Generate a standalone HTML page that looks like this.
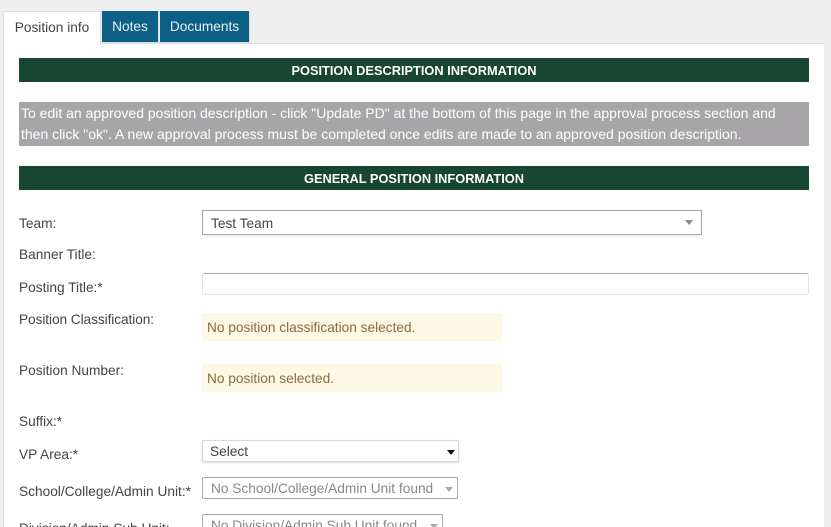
<!DOCTYPE html>
<html>
<head>
<meta charset="utf-8">
<style>
html,body{margin:0;padding:0;width:831px;height:527px;overflow:hidden;background:#eee}
body{position:relative;font-family:"Liberation Sans",sans-serif;font-size:13.7px;color:#444}
div{position:absolute;box-sizing:border-box;white-space:nowrap}
.panel{left:3px;top:43px;width:821px;height:484px;background:#fff;border-left:1px solid #ddd;border-top:1px solid #ddd}
.tab{top:11px;height:32px;background:#0c5f86;color:#e8eef2;line-height:32px;text-align:center;border-bottom:1px solid #ddd;border-right:1px solid #ddd}
.bar{left:19px;width:790px;height:24px;background:#184632;color:#fff;font-weight:bold;font-size:12.8px;line-height:25px;text-align:center}
.lbl{left:19px;line-height:18px;color:#444}
.warn{left:202px;width:300px;height:28px;background:#fdf7e6;color:#8a6d3b;line-height:29px;padding-left:5px}
.sel{background:#fff;border:1px solid #aaa;border-radius:2px}
.arr{width:0;height:0;border-left:4px solid transparent;border-right:4px solid transparent;border-top:5px solid #888}
</style>
</head>
<body>
<div class="panel"></div>
<div style="left:3px;top:11px;width:98px;height:34px;background:#fff;border:1px solid #ddd;border-bottom:0;line-height:31px;text-align:center;color:#444">Position info</div>
<div class="tab" style="left:102px;width:57px">Notes</div>
<div class="tab" style="left:160px;width:90px">Documents</div>

<div class="bar" style="top:58px">POSITION DESCRIPTION INFORMATION</div>
<div style="left:19px;top:102px;width:790px;height:44px;background:#a7a5a8;color:#fff;font-size:14px;line-height:21px;padding:1px 0 0 2px">To edit an approved position description - click "Update PD" at the bottom of this page in the approval process section and<br>then click "ok". A new approval process must be completed once edits are made to an approved position description.</div>
<div class="bar" style="top:166px">GENERAL POSITION INFORMATION</div>

<div class="lbl" style="top:215px">Team:</div>
<div class="sel" style="left:202px;top:210px;width:500px;height:25px;border-color:#a5a5a5;border-radius:0;line-height:25px;padding-left:8px;box-shadow:0 2px 2px #eee">Test Team</div>
<div class="arr" style="left:685px;top:220px"></div>

<div class="lbl" style="top:246px">Banner Title:</div>

<div class="lbl" style="top:279px">Posting Title:*</div>
<div style="left:202px;top:273px;width:607px;height:22px;background:#fff;border:1px solid #dfe3ea;border-top-color:#aaa;border-radius:2px"></div>

<div class="lbl" style="top:311px;letter-spacing:-.08px">Position Classification:</div>
<div class="warn" style="top:313px">No position classification selected.</div>

<div class="lbl" style="top:362px">Position Number:</div>
<div class="warn" style="top:364px">No position selected.</div>

<div class="lbl" style="top:413px">Suffix:*</div>

<div class="lbl" style="top:446px">VP Area:*</div>
<div class="sel" style="left:202px;top:440px;width:257px;height:22px;border-color:#d5d8df;line-height:21px;padding-left:7px;box-shadow:0 1px 2px #ddd">Select</div>
<div class="arr" style="left:447px;top:450px;border-top-color:#111"></div>

<div class="lbl" style="top:483px">School/College/Admin Unit:*</div>
<div class="sel" style="left:202px;top:477px;width:256px;height:22px;line-height:22px;padding-left:8px;color:#888">No School/College/Admin Unit found</div>
<div class="arr" style="left:445px;top:487px;border-top-color:#aaa"></div>

<div class="lbl" style="top:520px">Division/Admin Sub Unit:</div>
<div class="sel" style="left:202px;top:514px;width:241px;height:22px;line-height:22px;padding-left:8px;color:#888">No Division/Admin Sub Unit found</div>
<div class="arr" style="left:430px;top:524px;border-top-color:#aaa"></div>
</body>
</html>
